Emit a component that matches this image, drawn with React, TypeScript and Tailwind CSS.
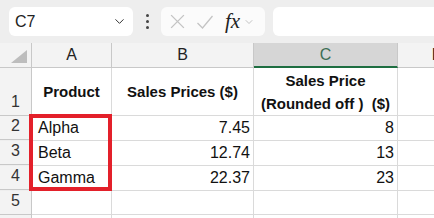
import { ChevronDown } from 'lucide-react';

const font = { fontFamily: '"Liberation Sans", Arial, sans-serif' };

type Row = { n: string; a: string; b: string; c: string };

const rows: Row[] = [
  { n: '2', a: 'Alpha', b: '7.45', c: '8' },
  { n: '3', a: 'Beta', b: '12.74', c: '13' },
  { n: '4', a: 'Gamma', b: '22.37', c: '23' },
  { n: '5', a: '', b: '', c: '' },
  { n: '', a: '', b: '', c: '' },
];

const cell = 'border-r border-b border-[#dadada] bg-white';
const rowHead = 'border-r border-b border-[#c8c8c8] bg-[#f3f3f3] text-[16px] text-[#333] flex items-end justify-center pb-[1px]';

export default function App() {
  return (
    <div className="w-[434px] h-[218px] overflow-hidden bg-[#eeeeee] relative" style={font}>
      {/* formula bar */}
      <div className="h-[43px] flex items-start pt-[7px] pl-[9px]">
        <div className="w-[124px] h-[29px] bg-white rounded-[6px] flex items-center justify-between pl-[6px] pr-[6px]">
          <span className="text-[16px] text-[#222]">C7</span>
          <ChevronDown size={15} strokeWidth={1.6} className="text-[#333]" />
        </div>
        <div className="w-[28px] h-[29px] flex flex-col items-center justify-center gap-[3px]">
          <span className="w-[3px] h-[3px] rounded-full bg-[#444]" />
          <span className="w-[3px] h-[3px] rounded-full bg-[#444]" />
          <span className="w-[3px] h-[3px] rounded-full bg-[#444]" />
        </div>
        <div className="w-[104px] h-[29px] bg-[#fbfbfb] rounded-[6px] flex items-center pl-[8px]">
          <svg width="17" height="17" viewBox="0 0 16 16" className="mr-[10px]">
            <path d="M2 2 L14 14 M14 2 L2 14" stroke="#c4c4c4" strokeWidth="1.3" fill="none" />
          </svg>
          <svg width="18" height="16" viewBox="0 0 18 16" className="mr-[11px]">
            <path d="M1.5 9 L6.5 14 L16.5 2" stroke="#c4c4c4" strokeWidth="1.3" fill="none" />
          </svg>
          <span className="text-[21px] italic text-[#222] leading-none mr-[3px]" style={{ fontFamily: '"Liberation Serif", serif' }}>
            fx
          </span>
          <ChevronDown size={12} strokeWidth={1.4} className="text-[#aaa]" />
        </div>
        <div className="ml-[8px] flex-1 h-[29px] bg-white rounded-l-[6px]" />
      </div>

      {/* sheet */}
      <div className="relative">
        <div className="grid grid-cols-[32px_80px_142px_144px_80px]">
          {/* column headers */}
          <div className="h-[25px] border-r border-b border-[#c8c8c8] bg-[#f3f3f3] relative">
            <span className="absolute right-[4px] bottom-[4px] w-0 h-0 border-l-[16px] border-l-transparent border-b-[13px] border-b-[#bdbdbd]" />
          </div>
          <div className="h-[25px] border-r border-b border-[#c8c8c8] bg-[#f3f3f3] text-[16px] text-[#222] flex items-center justify-center">A</div>
          <div className="h-[25px] border-r border-b border-[#c8c8c8] bg-[#f3f3f3] text-[16px] text-[#222] flex items-center justify-center">B</div>
          <div className="h-[25px] border-r border-[#c8c8c8] border-b-2 border-b-[#1e6e41] bg-[#d6d6d6] text-[16px] text-[#3d6e55] flex items-center justify-center">C</div>
          <div className="h-[25px] border-b border-[#c8c8c8] bg-[#f3f3f3] text-[16px] text-[#222] flex items-center justify-start pl-[34px] font-bold">D</div>

          {/* row 1 */}
          <div className={`h-[48px] ${rowHead}`}>1</div>
          <div className={`${cell} flex items-center justify-center font-bold text-[15px] text-[#111] pt-[2px]`}>Product</div>
          <div className={`${cell} flex items-center justify-center font-bold text-[15px] text-[#111] pt-[2px]`}>Sales Prices ($)</div>
          <div className={`${cell} flex flex-col items-center justify-center font-bold text-[15px] text-[#111] leading-[23px] pt-[1px]`}>
            <span>Sales Price</span>
            <span>(Rounded off )&nbsp;&nbsp;($)</span>
          </div>
          <div className={cell} />

          {rows.map((r, i) => (
            <div key={i} className="contents">
              <div className={`h-[24px] ${rowHead}`}>{r.n}</div>
              <div className={`${cell} flex items-center pl-[6px] text-[16px] text-[#111]`}>{r.a}</div>
              <div className={`${cell} flex items-center justify-end pr-[3px] text-[16px] text-[#111]`}>{r.b}</div>
              <div className={`${cell} flex items-center justify-end pr-[3px] text-[16px] text-[#111]`}>{r.c}</div>
              <div className={cell} />
            </div>
          ))}
        </div>

        {/* annotation box */}
        <div className="absolute left-[29px] top-[71px] w-[83px] h-[77px] border-4 border-[#e3202a]" />
      </div>
    </div>
  );
}
